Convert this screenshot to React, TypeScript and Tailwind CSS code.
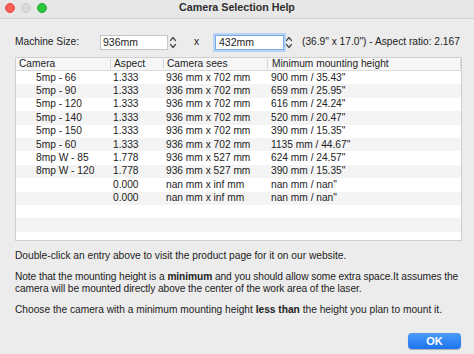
import React from "react";

const rows: [string, string, string, string][] = [
  ["5mp - 66", "1.333", "936 mm x 702 mm", "900 mm / 35.43\""],
  ["5mp - 90", "1.333", "936 mm x 702 mm", "659 mm / 25.95\""],
  ["5mp - 120", "1.333", "936 mm x 702 mm", "616 mm / 24.24\""],
  ["5mp - 140", "1.333", "936 mm x 702 mm", "520 mm / 20.47\""],
  ["5mp - 150", "1.333", "936 mm x 702 mm", "390 mm / 15.35\""],
  ["5mp - 60", "1.333", "936 mm x 702 mm", "1135 mm / 44.67\""],
  ["8mp W - 85", "1.778", "936 mm x 527 mm", "624 mm / 24.57\""],
  ["8mp W - 120", "1.778", "936 mm x 527 mm", "390 mm / 15.35\""],
  ["", "0.000", "nan mm x inf mm", "nan mm / nan\""],
  ["", "0.000", "nan mm x inf mm", "nan mm / nan\""],
  ["", "", "", ""],
  ["", "", "", ""],
  ["", "", "", ""],
];

function Stepper() {
  return (
    <div className="w-[10px] h-[16px] flex items-center justify-center">
      <svg width="8" height="15" viewBox="0 0 8 15" fill="none">
        <path d="M1.5 5.5 L4 2.5 L6.5 5.5" stroke="#4a4a4a" strokeWidth="1.2" strokeLinecap="round" strokeLinejoin="round" />
        <path d="M1.5 9.5 L4 12.5 L6.5 9.5" stroke="#4a4a4a" strokeWidth="1.2" strokeLinecap="round" strokeLinejoin="round" />
      </svg>
    </div>
  );
}

export default function App() {
  return (
    <div
      className="w-[474px] h-[354px] bg-[#ececec] flex flex-col text-[#222] overflow-hidden"
      style={{ fontFamily: '"Liberation Sans", Arial, sans-serif' }}
    >
      {/* Title bar */}
      <div className="h-[19px] bg-[#e7e7e7] border-b border-[#d2d2d2] grid grid-cols-[1fr_auto_1fr] items-start">
        <div className="flex gap-[6px] pl-[5px] pt-[2.5px]">
          <div className="w-[10px] h-[10px] rounded-full bg-[#fd5f57] border border-[#e2463f]" />
          <div className="w-[10px] h-[10px] rounded-full bg-[#d9d9d9] border border-[#cdcdcd]" />
          <div className="w-[10px] h-[10px] rounded-full bg-[#2bc840] border border-[#1eaa31]" />
        </div>
        <div className="text-[10.7px] font-bold leading-[15px] text-[#2e2e2e]">Camera Selection Help</div>
        <div />
      </div>

      {/* Machine size row */}
      <div className="mt-[15px] h-[16px] flex items-center text-[10.2px]">
        <div className="w-[100px] pl-[15px]">Machine Size:</div>
        <div className="w-[68px] h-[15px] bg-white border border-[#c6c6c6] flex items-center pl-[2px] leading-none text-[10.5px]">
          936mm
        </div>
        <Stepper />
        <div className="w-[37px] text-center">x</div>
        <div className="w-[69px] h-[15px] bg-white border border-[#79a9e6] shadow-[0_0_0_2px_#b9d3f4] flex items-center pl-[3px] leading-none text-[10.5px]">
          432mm
        </div>
        <Stepper />
        <div className="ml-[8px] whitespace-nowrap">(36.9" x 17.0") - Aspect ratio: 2.167</div>
      </div>

      {/* Table */}
      <div className="mt-[7px] ml-[15px] w-[447px] h-[184px] border border-[#cfcfcf] bg-white overflow-hidden text-[10.2px]">
        <div className="h-[13px] flex bg-[#f6f6f6] border-b border-[#dadada] leading-[12px]">
          <div className="w-[94px] pl-[3px]">Camera</div>
          <div className="w-[53px] pl-[3px] border-l border-[#d6d6d6] my-[1px] leading-[10px]">Aspect</div>
          <div className="w-[104px] pl-[3px] border-l border-[#d6d6d6] my-[1px] leading-[10px]">Camera sees</div>
          <div className="w-[194px] pl-[4px] border-l border-r border-[#d6d6d6] my-[1px] leading-[10px]">Minimum mounting height</div>
        </div>
        {rows.map((r, i) => (
          <div
            key={i}
            className={`h-[13.4px] flex items-center leading-none ${i % 2 === 1 ? "bg-[#f4f4f4]" : "bg-white"}`}
          >
            <div className="w-[94px] pl-[20px] whitespace-nowrap">{r[0]}</div>
            <div className="w-[53px] pl-[3px]">{r[1]}</div>
            <div className="w-[104px] pl-[3px] whitespace-nowrap">{r[2]}</div>
            <div className="w-[194px] pl-[4px] whitespace-nowrap">{r[3]}</div>
          </div>
        ))}
      </div>

      {/* Help text */}
      <div className="mt-[9px] pl-[15px] pr-[10px] text-[10.2px] leading-[12px] flex flex-col gap-[9px]">
        <p>Double-click an entry above to visit the product page for it on our website.</p>
        <p className="whitespace-nowrap tracking-[-0.08px]">
          Note that the mounting height is a <b>minimum</b> and you should allow some extra space.It assumes the
          <br />
          camera will be mounted directly above the center of the work area of the laser.
        </p>
        <p>
          Choose the camera with a minimum mounting height <b>less than</b> the height you plan to mount it.
        </p>
      </div>

      {/* OK button */}
      <div className="mt-[17px] flex justify-end pr-[13px]">
        <button className="w-[53px] h-[16px] rounded-[4px] bg-gradient-to-b from-[#4c9bf8] to-[#1a73f0] text-white text-[11px] font-semibold leading-none shadow-[0_0.5px_1px_rgba(0,0,0,0.25)]">
          OK
        </button>
      </div>
    </div>
  );
}
